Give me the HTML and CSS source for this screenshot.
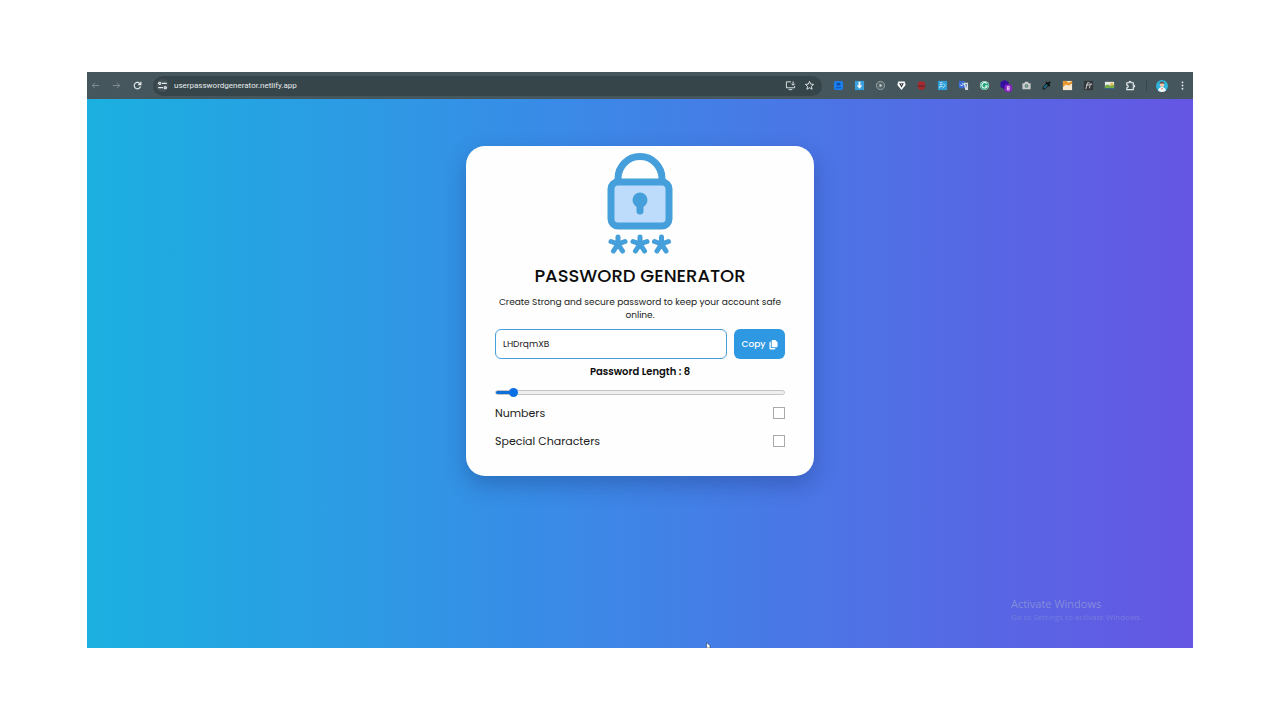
FILE: index.html
```html
<!DOCTYPE html>
<html lang="en">
  <head>
    <meta charset="utf-8">
    <meta name="viewport" content="width=device-width, initial-scale=1">
    <title>Password Generator</title>
    <link rel="stylesheet" href="styles.css">
  </head>
  <body>
    <div class="browser">
      <!-- browser toolbar -->
      <header class="toolbar">
        <div class="nav">
          <button class="icon-btn dim" aria-label="Back"><svg viewBox="0 0 12 12"><path class="line" d="M10 6H2.5M5.5 3l-3 3 3 3"/></svg></button>
          <button class="icon-btn dim" aria-label="Forward"><svg viewBox="0 0 12 12"><path class="line" d="M2 6h7.500M6.500 3l3 3-3 3"/></svg></button>
          <button class="icon-btn" aria-label="Reload"><svg viewBox="0 0 12 12"><path class="line bold" d="M9.300 7a3.500 3.500 0 1 1-.9-3.400L9.500 4.700M9.700 2v3H6.700"/></svg></button>
        </div>
        <div class="address">
          <svg class="site" viewBox="0 0 12 12"><circle cx="6" cy="6" r="6" fill="#445258"/><path class="line bold" d="M2 4h1M5.500 4H10M2 8h4.500M9 8h1"/><circle class="line" cx="3.500" cy="4" r="1"/><circle class="line" cx="8.500" cy="8" r="1"/></svg>
          <span class="url">userpasswordgenerator.netlify.app</span>
          <button class="icon-btn" aria-label="Install"><svg viewBox="0 0 12 12"><path class="line" d="M6.500 2h-5v6.500h9V6.500M4 10.500h4M8.800 1.500v4M7 4l1.800 1.800L10.600 4"/></svg></button>
          <button class="icon-btn" aria-label="Bookmark"><svg viewBox="0 0 12 12"><path class="line" d="M6 1.500l1.300 3 3.200.3-2.400 2.100.7 3.200L6 8.400l-2.800 1.700.7-3.200L1.500 4.800l3.200-.3z"/></svg></button>
        </div>
        <div class="extensions">
          <svg viewBox="0 0 12 12"><rect x="1" y="1" width="10" height="10" rx="2" fill="#1b7ff0"/><path d="M4 3h4v3H4zM3 8h6v1H3z" fill="#0a4fae"/></svg>
          <svg viewBox="0 0 12 12"><rect x="1" y="1" width="10" height="10" fill="#3aa0dc"/><path d="M5 2h2v4h2L6 9.500 3 6h2z" fill="#fff"/></svg>
          <svg viewBox="0 0 12 12"><circle cx="6" cy="6" r="4.500" fill="#58666b" stroke="#9aa4a7"/><path d="M5 4l3 2-3 2z" fill="#cdd3d5"/></svg>
          <svg viewBox="0 0 12 12"><path d="M2.500 1.500h7l1 4L6 11 1.500 5.500z" fill="#fff"/><path d="M3.500 3.500h5L6 8.500z" fill="#29353a"/><path d="M5.300 4h1.400L6 6z" fill="#fff"/></svg>
          <svg viewBox="0 0 12 12"><path d="M4 1.500h4l2 2v5L8 10.500H4l-2-2v-5z" fill="#a62a2d"/><path d="M2 6h8v1.500H2z" fill="#612a2f"/></svg>
          <svg viewBox="0 0 12 12"><rect x="1" y="1" width="10" height="10" fill="#2f9ed6"/><path d="M3 3h3M3 5h3M3 9V7h3M7 4l2 2-3 3" fill="none" stroke="#c6ecff"/></svg>
          <svg viewBox="0 0 12 12"><path d="M1 1h6l2 8H1z" fill="#3b6bd6"/><path d="M6 3h5v8H8z" fill="#d9dfe6"/><path d="M2.500 5a1.500 1.500 0 1 0 2.500-1.500" fill="none" stroke="#fff"/><path d="M8 5h2M9 5v3" stroke="#5b7ea8" fill="none"/></svg>
          <svg viewBox="0 0 12 12"><circle cx="6" cy="6" r="5" fill="#e4f4ee"/><circle cx="6" cy="6" r="4.500" fill="#1fa67a"/><path d="M8.500 4A3 3 0 1 0 9 6.500H6.500" fill="none" stroke="#fff" stroke-width="1.200"/></svg>
          <svg class="badged" viewBox="0 0 12 12"><path d="M5 0l4.500 2.500v5L5 10 .5 7.500v-5z" fill="#3510a0"/><rect x="5" y="5" width="8" height="8" rx="2" fill="#8d22c9"/><path d="M8 7h2v4H8zM8 9h2" fill="none" stroke="#fff" stroke-width=".8"/></svg>
          <svg viewBox="0 0 12 12"><path d="M1.500 3.500h2l1-1.500h3l1 1.500h2V10h-9z" fill="#c6cbcc"/><circle cx="6" cy="6.500" r="2" fill="#5f6d70"/><circle cx="6" cy="6.500" r="1" fill="#75c48d"/></svg>
          <svg viewBox="0 0 12 12"><path d="M2 10l.5-2.500 4-4 2 2-4 4z" fill="#1a6b86" stroke="#111"/><path d="M6 3l3 3M7.500 4.500l2-2" stroke="#0c1114" stroke-width="2" stroke-linecap="round"/></svg>
          <svg viewBox="0 0 12 12"><rect x="1" y="1" width="10" height="10" fill="#f7ead1"/><path d="M1 1h4l2 2 4-2v3L7 6 4 5 1 8z" fill="#e8962e"/></svg>
          <svg viewBox="0 0 12 12"><rect x="1" y="1" width="10" height="10" fill="#33373a"/><path d="M3 10l2-7h2M3.500 5.500h3M6.500 4.500h3.500M8 4.500L7 9" fill="none" stroke="#e5e5e5" stroke-width=".9"/></svg>
          <svg viewBox="0 0 12 12"><rect x="1" y="2" width="10" height="7" fill="#e8edea"/><path d="M1 6l3-1 3 1 4-1v4H1z" fill="#75ab4a"/><rect x="7" y="3" width="3" height="3" fill="#e8bf4a"/><path d="M1 9h10v1H1z" fill="#2d5d90"/></svg>
          <svg viewBox="0 0 12 12"><path class="line bold" d="M2 3h2.500V2.500a1 1 0 0 1 2 0V3H9v2.500h.5a1 1 0 0 1 0 2H9V10.500H2V8.500a1.500 1.500 0 0 0 0-3z"/></svg>
        </div>
        <span class="divider"></span>
        <svg class="avatar" viewBox="0 0 12 12"><circle cx="6" cy="6" r="6" fill="#2eb4dc"/><path d="M2 10.500Q3 7 6 7t4 3.500A6 6 0 0 1 2 10.500" fill="#f4f6f7"/><circle cx="6" cy="4.800" r="2.300" fill="#f0c7ad"/><path d="M3.500 4.500Q3.500 1.500 6 1.500T8.500 4.500L7.500 3.500h-3z" fill="#654746"/><path d="M5.300 8h1.400L6 10z" fill="#d45450"/></svg>
        <button class="icon-btn" aria-label="Menu"><svg viewBox="0 0 12 12" fill="#e6ebec"><circle cx="6" cy="2.500" r="1"/><circle cx="6" cy="6" r="1"/><circle cx="6" cy="9.500" r="1"/></svg></button>
      </header>

      <main class="page">
        <form class="card">
          <svg class="lock" viewBox="0 0 66 102">
            <path d="M11 29V25.500a22 22 0 0 1 44 0V29" fill="none" stroke="#459fdb" stroke-width="7"/>
            <rect x="4" y="29" width="58" height="44" rx="7" fill="#bddcfb" stroke="#459fdb" stroke-width="7"/>
            <circle cx="33" cy="47" r="7.500" fill="#459fdb"/>
            <path d="M33 48v10" stroke="#459fdb" stroke-width="7" stroke-linecap="round"/>
            <g stroke="#459fdb" stroke-width="5" stroke-linecap="round">
              <path d="M11 91v-7M11 91l7-2.500M11 91l4.500 7M11 91l-4.500 7M11 91l-7-2.500"/>
              <path d="M33 91v-7M33 91l7-2.500M33 91l4.500 7M33 91l-4.500 7M33 91l-7-2.500"/>
              <path d="M54.500 91v-7M54.500 91l7-2.500M54.500 91l4.500 7M54.500 91l-4.500 7M54.500 91l-7-2.500"/>
            </g>
          </svg>
          <h1>PASSWORD GENERATOR</h1>
          <p>Create Strong and secure password to keep your account safe online.</p>
          <div class="result">
            <input class="password" type="text" value="LHDrqmXB" aria-label="Password" readonly>
            <button class="copy" type="button">Copy
              <svg viewBox="0 0 10 12"><path d="M4 1h3l2.500 2.500V8a1 1 0 0 1-1 1H4a1 1 0 0 1-1-1V2a1 1 0 0 1 1-1zM2 3v6a1 1 0 0 0 1 1h4v.5a1 1 0 0 1-1 1H1.500a1 1 0 0 1-1-1V4a1 1 0 0 1 1-1z" fill="#fff"/></svg>
            </button>
          </div>
          <label class="length" for="length">Password Length : 8</label>
          <input class="slider" id="length" type="range" min="6" max="50" value="8">
          <div class="option">
            <label for="numbers">Numbers</label>
            <input id="numbers" type="checkbox">
          </div>
          <div class="option">
            <label for="special">Special Characters</label>
            <input id="special" type="checkbox">
          </div>
        </form>
        <div class="watermark">
          <div class="watermark-title">Activate Windows</div>
          <div class="watermark-text">Go to Settings to activate Windows.</div>
        </div>
        <svg class="cursor" viewBox="0 0 6 8"><path d="M.5.5v7.500h4.500V5z" fill="#fff" stroke="#234" stroke-width=".7"/></svg>
      </main>
    </div>
  </body>
</html>
```
FILE: styles.css
```css
*{
  margin: 0;
  padding: 0;
  box-sizing: border-box;
}
body{
  min-height: 100vh;
  padding: 72px 87px;
  display: flex;
  background-color: #fff;
  font-family: Poppins, Inter, "Liberation Sans", sans-serif;
}
button{
  border: none;
  background: none;
}
svg{
  display: block;
}
.browser{
  flex: 1;
  display: flex;
  flex-direction: column;
}

/* toolbar */
.toolbar{
  height: 27px;
  padding: 0 5px 0 3px;
  display: flex;
  align-items: center;
  background-color: #45565c;
}
.nav{
  display: flex;
  gap: 10px;
  margin-right: 10px;
}
.icon-btn,
.icon-btn svg{
  width: 11px;
  height: 11px;
}
.dim{
  opacity: .4;
}
.line{
  fill: none;
  stroke: #e6ebec;
  stroke-width: 1;
}
.bold{
  stroke-width: 1.3;
}
.address{
  flex: 1;
  height: 20px;
  padding: 0 7px 0 3px;
  display: flex;
  align-items: center;
  gap: 8px;
  border-radius: 10px;
  background-color: #36454a;
}
.site{
  width: 13px;
  height: 13px;
}
.url{
  flex: 1;
  margin-left: -3px;
  color: #e6ebec;
  font: 8px/12px Roboto, sans-serif;
}
.extensions{
  width: 303px;
  margin-left: 11px;
  display: flex;
  justify-content: space-between;
}
.extensions svg{
  width: 11px;
  height: 11px;
}
.extensions .badged{
  overflow: visible;
}
.divider{
  width: 1px;
  height: 10px;
  margin: 0 9px 0 10px;
  background-color: #34474d;
}
.avatar{
  width: 12px;
  height: 12px;
  margin-right: 9px;
}

/* page */
.page{
  flex: 1;
  position: relative;
  padding: 47px 0;
  background: linear-gradient(to right, #1bb0e0, #3a8ae7 43%, #6556e3);
}
.card{
  width: 348px;
  margin: 0 auto;
  padding: 7px 29px 21px;
  display: flex;
  flex-direction: column;
  border-radius: 19px;
  background-color: #fdfefd;
  box-shadow: 0 9px 22px rgba(20, 40, 100, .3);
  color: #222;
}
.lock{
  width: 66px;
  height: 102px;
  align-self: center;
}
h1{
  margin-top: 7px;
  color: #0c0c0c;
  font-size: 18px;
  font-weight: 500;
  line-height: 28px;
  text-align: center;
}
p{
  margin: 6px 0 7px;
  font-size: 9px;
  line-height: 13px;
  text-align: center;
}
.result{
  display: flex;
  gap: 7px;
}
.password{
  flex: 1;
  min-width: 0;
  height: 30px;
  padding: 0 7px;
  border: 1px solid #459fdb;
  border-radius: 6px;
  outline: none;
  background-color: #fff;
  color: #222;
  font: inherit;
  font-size: 9px;
}
.copy{
  width: 51px;
  display: flex;
  align-items: center;
  justify-content: center;
  gap: 3px;
  border-radius: 6px;
  background-color: #2f98e2;
  color: #fff;
  font: inherit;
  font-size: 9px;
  font-weight: 500;
}
.copy svg{
  width: 9px;
  height: 11px;
}
.length{
  margin-top: 5px;
  color: #0c0c0c;
  font-size: 10px;
  font-weight: 600;
  line-height: 16px;
  text-align: center;
}
.slider{
  height: 10px;
  margin: 7px 0 2px;
  appearance: none;
  background: none;
}
.slider::-webkit-slider-runnable-track{
  height: 5px;
  border: 1px solid #c4c4c4;
  border-radius: 3px;
  background: linear-gradient(to right, #0e6fd8 18px, #efefef 18px);
}
.slider::-webkit-slider-thumb{
  width: 9px;
  height: 9px;
  margin-top: -3px;
  appearance: none;
  border-radius: 50%;
  background-color: #0b70e4;
}
.option{
  height: 28px;
  display: flex;
  align-items: center;
  justify-content: space-between;
  font-size: 11px;
}
.option input{
  width: 12px;
  height: 12px;
  appearance: none;
  border: 1px solid #aaa;
  background-color: #fff;
}

.watermark{
  position: absolute;
  right: 51px;
  bottom: 25px;
  color: rgba(160, 170, 215, .6);
  font-family: "Open Sans", sans-serif;
}
.watermark-title{
  font-size: 11px;
  line-height: 15px;
}
.watermark-text{
  color: rgba(150, 160, 215, .45);
  font-size: 8px;
  line-height: 12px;
}
.cursor{
  position: absolute;
  left: 56%;
  bottom: 0;
  width: 5px;
  height: 6px;
}
```
